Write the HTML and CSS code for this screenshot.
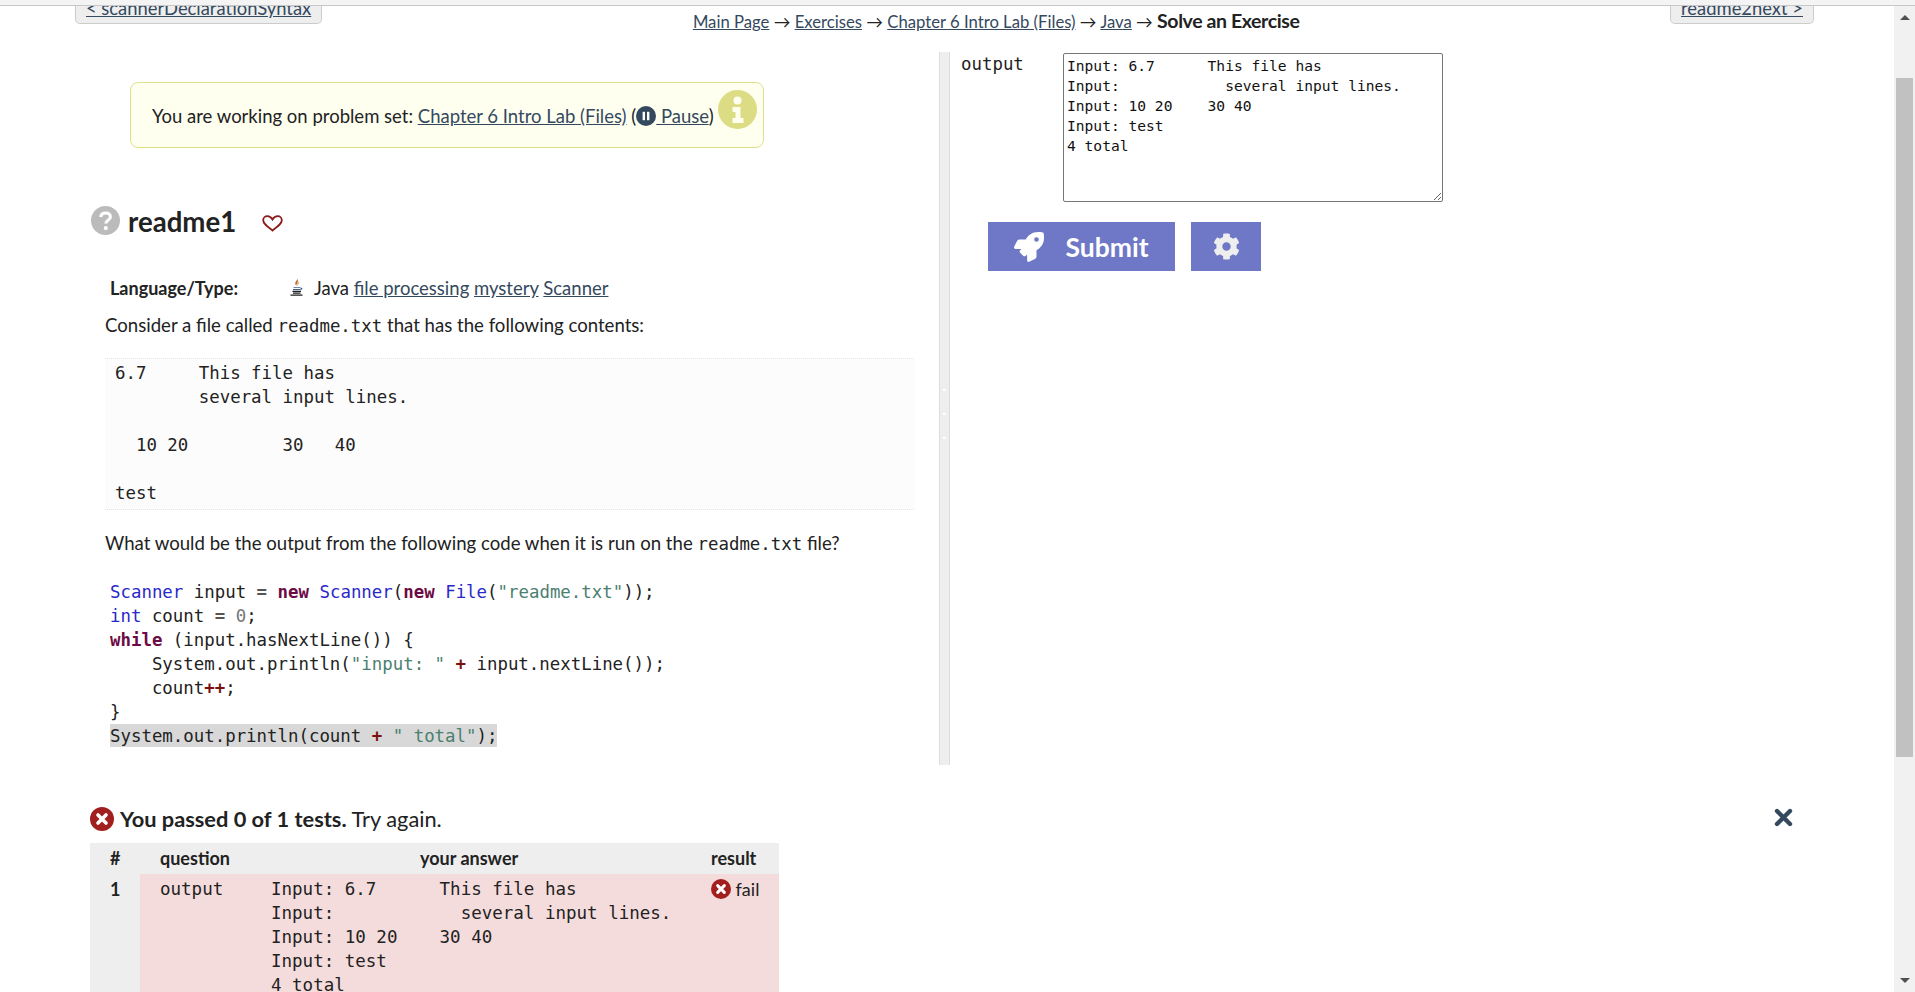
FILE: index.html
```html
<!DOCTYPE html>
<html lang="en">
<head>
<meta charset="utf-8">
<title>readme1 - Solve an Exercise</title>
<link rel="stylesheet" href="styles.css">
</head>
<body>
<div class="strip"></div>
<div class="window">
<main class="main">
  <nav class="nav">
    <div class="navbtn prev"><a href="#">&lt; scannerDeclarationSyntax</a></div>
    <div class="crumbs"><a href="#">Main Page</a> → <a href="#">Exercises</a> → <a href="#">Chapter 6 Intro Lab (Files)</a> → <a href="#">Java</a> → <b>Solve an Exercise</b></div>
    <div class="navbtn next"><a href="#">readme2next &gt;</a></div>
  </nav>
  <div class="columns">
    <section class="left">
      <div class="notice">
        <span class="notice-text">You are working on problem set: <a href="#">Chapter 6 Intro Lab (Files)</a> (<a href="#"><svg class="pause" viewBox="0 0 20 20"><circle cx="10" cy="10" r="10" fill="#34495e"/><rect x="6.6" y="5.8" width="2.4" height="8.4" fill="#fff"/><rect x="11" y="5.8" width="2.4" height="8.4" fill="#fff"/></svg> Pause</a>)</span>
        <svg class="info" viewBox="0 0 39 39"><circle cx="19.5" cy="19.5" r="19.5" fill="#dcdc85"/><circle cx="19.5" cy="10.5" r="4" fill="#fffff0"/><path d="M14.5 17h8v11h3v5h-11v-5h3v-6h-3z" fill="#fffff0"/></svg>
      </div>
      <h1 class="title">
        <svg class="qmark" viewBox="0 0 28 28"><circle cx="14" cy="14" r="14" fill="#bbb"/><path d="M9.4 10.6c.3-2.6 2.2-3.9 4.7-3.9 2.700 0 4.600 1.600 4.600 3.800 0 3.400-4.400 3.300-4.400 6.500" fill="none" stroke="#fff" stroke-width="3"/><circle cx="14.300" cy="21.300" r="2" fill="#fff"/></svg>
        <span>readme1</span>
        <svg class="heart" viewBox="0 0 21 17"><path d="M10.500 15.500C5 11.300 1.200 8.700 1.200 5.300 1.200 2.900 3 1.200 5.300 1.200c2.200 0 4 1.300 5.200 3.300 1.200-2 3-3.300 5.200-3.300 2.300 0 4.100 1.700 4.100 4.100 0 3.400-3.800 6-9.300 10.200z" fill="none" stroke="#8a1c1c" stroke-width="1.800"/></svg>
      </h1>
      <div class="meta">
        <b class="meta-label">Language/Type:</b>
        <svg class="java" viewBox="0 0 13 18"><path d="M7 0c1.500 2.200-2.800 3.600-1.500 6.500.3.600.6 1 .9 1.500C6 5.500 9.500 4 7 0zM9.500 3.800C7.500 4.800 7 6.300 8 8c-.1-1.500.5-3 1.500-4.200z" fill="#b5651d"/><path d="M3.500 9.200h6.500v.9H3.500zM3 11h7v1H3zM10 9.500c2 0 3 .8 2 2l-2 .8v-.8c1.200-.3 1.500-1.200 0-1.300z" fill="#3b5f8a"/><path d="M2.500 12.800h8.500v1.300H2.500zM3 14.600h7.500v1.200H3zM0.500 16.400h12v1.300h-12z" fill="#1c1c1c"/></svg>
        <span class="meta-value">Java <a href="#">file processing</a> <a href="#">mystery</a> <a href="#">Scanner</a></span>
      </div>
      <p class="para consider">Consider a file called <code>readme.txt</code> that has the following contents:</p>
      <pre class="filebox">6.7     This file has
        several input lines.

  10 20         30   40

test</pre>
      <p class="para what">What would be the output from the following code when it is run on the <code>readme.txt</code> file?</p>
      <pre class="code"><span class="ty">Scanner</span> input <span class="op">=</span> <span class="kw">new</span> <span class="ty">Scanner</span>(<span class="kw">new</span> <span class="ty">File</span>(<span class="str">"readme.txt"</span>));
<span class="ty">int</span> count <span class="op">=</span> <span class="num">0</span>;
<span class="kw">while</span> (input.hasNextLine()) {
    System.out.println(<span class="str">"input: "</span> <span class="op2">+</span> input.nextLine());
    count<span class="op2">++</span>;
}
<span class="hl">System.out.println(count <span class="op2">+</span> <span class="str">" total"</span>);</span></pre>
    </section>
    <div class="split"><i></i><i></i><i></i></div>
    <section class="right">
      <div class="answer">
        <label class="answer-label" for="out">output</label>
        <textarea class="answer-box" id="out" spellcheck="false">Input: 6.7      This file has
Input:            several input lines.
Input: 10 20    30 40
Input: test
4 total</textarea>
      </div>
      <div class="actions">
        <button class="btn submit"><svg class="rocket" viewBox="0 0 512 512"><path fill="#fff" d="M505.12 19.09c-1.19-5.53-6.66-11-12.21-12.19C460.72 0 435.51 0 410.41 0 307.18 0 245.27 55.2 199.05 128H94.84c-16.35.02-35.56 11.88-42.89 26.48L2.52 253.3A28.4 28.4 0 0 0 0 264a24 24 0 0 0 24 24h103.81l-22.47 22.47c-11.37 11.36-13 32.26 0 45.25l50.9 50.91c11.16 11.19 32.16 13.16 45.28 0L224 384.16V488a24 24 0 0 0 24 24 28.56 28.56 0 0 0 10.71-2.52l98.73-49.39c14.63-7.3 26.51-26.5 26.51-42.86V312.8c72.6-46.31 128.03-108.41 128.03-211.1.1-25.2.1-50.4-6.86-82.61zM384.04 168a40 40 0 1 1 40.01-40 40.02 40.02 0 0 1-40.01 40z"/></svg><span>Submit</span></button>
        <button class="btn gear"><svg class="cog" viewBox="0 0 512 512"><path fill="#eee" d="M487.4 315.7l-42.6-24.6c4.3-23.2 4.3-47 0-70.2l42.6-24.6c4.9-2.8 7.1-8.6 5.500-14-11.100-35.600-30-67.800-54.700-94.600-3.800-4.100-10-5.100-14.800-2.300L380.800 110c-17.900-15.400-38.500-27.300-60.800-35.100V25.800c0-5.600-3.900-10.500-9.400-11.700-36.700-8.200-74.300-7.800-109.200 0-5.500 1.200-9.400 6.100-9.400 11.700V75c-22.200 7.900-42.800 19.800-60.800 35.100L88.700 85.500c-4.900-2.800-11-1.900-14.800 2.300-24.700 26.700-43.600 58.900-54.700 94.600-1.700 5.400.6 11.200 5.500 14L67.300 221c-4.300 23.200-4.300 47 0 70.200l-42.600 24.600c-4.900 2.800-7.100 8.600-5.500 14 11.100 35.600 30 67.800 54.700 94.600 3.800 4.100 10 5.100 14.800 2.300l42.600-24.600c17.900 15.400 38.500 27.300 60.800 35.100v49.200c0 5.600 3.900 10.500 9.400 11.700 36.700 8.200 74.300 7.800 109.200 0 5.500-1.200 9.400-6.100 9.400-11.700v-49.200c22.200-7.900 42.800-19.800 60.800-35.100l42.600 24.600c4.900 2.800 11 1.900 14.800-2.300 24.700-26.700 43.600-58.900 54.700-94.600 1.500-5.500-.7-11.300-5.600-14.100zM256 336c-44.100 0-80-35.900-80-80s35.900-80 80-80 80 35.900 80 80-35.900 80-80 80z"/></svg></button>
      </div>
    </section>
  </div>
  <section class="results">
    <div class="results-head">
      <div class="results-msg">
        <svg class="x-circle" viewBox="0 0 24 24"><circle cx="12" cy="12" r="12" fill="#a11f1f"/><path d="M8 8l8 8M16 8l-8 8" stroke="#fff" stroke-width="3.600" stroke-linecap="round"/></svg>
        <span><b>You passed 0 of 1 tests.</b> Try again.</span>
      </div>
      <svg class="close" viewBox="0 0 19 19"><path d="M3 3l13 13M16 3L3 16" stroke="#34495e" stroke-width="4.400" stroke-linecap="round"/></svg>
    </div>
    <table class="tests">
      <thead>
        <tr><th class="c-num">#</th><th class="c-q">question</th><th class="c-a">your answer</th><th class="c-r">result</th></tr>
      </thead>
      <tbody>
        <tr>
          <th class="c-num">1</th>
          <td class="c-q mono">output</td>
          <td class="c-a mono">Input: 6.7      This file has
Input:            several input lines.
Input: 10 20    30 40
Input: test
4 total</td>
          <td class="c-r"><svg class="x-small" viewBox="0 0 24 24"><circle cx="12" cy="12" r="12" fill="#a11f1f"/><path d="M8 8l8 8M16 8l-8 8" stroke="#fff" stroke-width="3.600" stroke-linecap="round"/></svg> fail</td>
        </tr>
      </tbody>
    </table>
  </section>
</main>
<div class="scrollbar">
  <span class="arrow up"></span>
  <span class="thumb"></span>
  <span class="arrow down"></span>
</div>
</div>
</body>
</html>
```
FILE: styles.css
```css
* { box-sizing: border-box; }
html, body { height: 100%; }
body {
  margin: 0;
  overflow: hidden;
  display: flex;
  flex-direction: column;
  background: #fff;
  color: #222;
  font-family: Lato, "Open Sans", sans-serif;
  font-size: 18px;
}
a { color: #34495e; text-decoration: underline; }
.strip { height: 6px; flex: none; background: #f4f4f4; border-bottom: 1px solid #c8c8c8; }
.window { flex: 1; min-height: 0; display: flex; }
.main { flex: 1; min-width: 0; overflow: hidden; }
.scrollbar { width: 21px; flex: none; background: #f1f1f1; display: flex; flex-direction: column; align-items: center; }
.thumb { width: 17px; height: 679px; background: #c1c1c1; margin-top: 58px; }
.arrow { width: 0; height: 0; border-left: 5px solid transparent; border-right: 5px solid transparent; }
.arrow.up { border-bottom: 5px solid #505050; margin-top: 9px; }
.arrow.down { border-top: 5px solid #505050; margin-top: 221px; }

.nav { height: 46px; display: flex; justify-content: space-between; align-items: flex-start; padding: 0 80px 0 75px; }
.navbtn { height: 18px; padding: 0 10px 5px; display: flex; align-items: flex-end; overflow: hidden; background: #eee; border: 1px solid #ccc; border-top: 0; border-radius: 0 0 5px 5px; line-height: 20px; font-size: 18.4px; }
.crumbs { padding-top: 3px; font-size: 16.7px; line-height: 24px; }
.crumbs b { font-size: 19.5px; font-weight: 700; letter-spacing: -0.4px; color: #222; }

.columns { display: flex; }
.left { width: 939px; flex: none; padding: 30px 25px 17px 90px; }
.split { width: 11px; flex: none; background: #eee; border-left: 1px solid #ddd; border-right: 1px solid #ddd; display: flex; flex-direction: column; align-items: center; gap: 22px; padding-top: 337px; }
.split i { width: 3px; height: 2px; background: #fff; }
.right { flex: 1; padding-left: 11px; }

.notice { margin-left: 40px; width: 634px; height: 66px; padding: 7px 6px 0 21px; display: flex; justify-content: space-between; background: #fffff0; border: 1px solid #dfe08a; border-radius: 8px; }
.notice-text { padding-top: 14px; font-size: 18.5px; line-height: 24px; white-space: nowrap; }
.pause { width: 20px; height: 20px; vertical-align: -3px; }
.info { width: 39px; height: 39px; flex: none; }
.title { margin: 58px 0 0; height: 32px; display: flex; align-items: center; font-size: 27.6px; font-weight: 700; line-height: 32px; color: #222; }
.qmark { width: 29px; height: 29px; margin: -4px 8px 0 1px; flex: none; }
.heart { width: 21px; height: 17px; margin-left: 26px; margin-top: 2px; }
.meta { margin: 38px 0 0 20px; display: flex; align-items: center; line-height: 24px; font-size: 18px; }
.meta-label { width: 179px; }
.java { width: 13px; height: 18px; margin: -3px 11px 0 1px; }
.meta-value { font-size: 18.5px; }
.para { margin: 13px 0 0 15px; line-height: 24px; font-size: 18.6px; }
.para code { font-family: "DejaVu Sans Mono", monospace; font-size: 17.4px; }
.what { margin-top: 21px; }
.filebox, .code, .mono, .answer-label { font-family: "DejaVu Sans Mono", monospace; font-size: 17.4px; line-height: 24px; }
.filebox { margin: 20px 0 0 15px; padding: 2px 10px 4px; background: #fcfcfc; border-top: 1px dotted #e4e4e4; border-bottom: 1px dotted #e4e4e4; }
.code { margin: 24px 0 0 20px; }
.ty { color: #2a28c8; }
.kw { color: #6d0a45; font-weight: 700; }
.str { color: #4a8070; }
.op { color: #555; font-weight: 700; }
.op2 { color: #7a1010; font-weight: 700; }
.num { color: #777; }
.hl { background: #d8d8d8; display: inline-block; height: 23px; }

.answer { display: flex; }
.answer-label { width: 102px; padding-top: 0; line-height: 24px; }
.answer-box { width: 380px; height: 149px; margin: 1px 0 0; padding: 2px 3px; border: 1px solid #767676; border-radius: 2px; font-family: "DejaVu Sans Mono", monospace; font-size: 14.6px; line-height: 20px; color: #111; background: #fff; resize: both; outline: 0; }
.actions { display: flex; gap: 16px; margin: 20px 0 0 27px; }
.btn { height: 49px; border: 0; padding: 0; background: #6f78c6; display: flex; align-items: center; justify-content: center; }
.submit { width: 187px; gap: 21px; color: #fff; font-family: Lato, sans-serif; font-size: 26.5px; font-weight: 700; }
.gear { width: 70px; }
.rocket { width: 30px; height: 30px; }
.cog { width: 27px; height: 27px; }

.results { padding: 42px 101px 0 90px; }
.results-head { height: 24px; display: flex; justify-content: space-between; align-items: center; }
.results-msg { display: flex; align-items: center; gap: 6px; font-size: 21.8px; line-height: 24px; }
.results-msg b { font-weight: 700; }
.x-circle { width: 24px; height: 24px; flex: none; }
.close { width: 19px; height: 19px; margin-top: -3px; }
.tests { margin-top: 12px; width: 689px; border-collapse: collapse; table-layout: fixed; }
.tests th, .tests td { padding: 0; text-align: left; vertical-align: top; }
.tests thead th { height: 31px; background: #eee; line-height: 31px; font-size: 18px; font-weight: 700; }
.tests tbody th { background: #eee; padding-top: 3px; line-height: 24px; font-weight: 700; font-size: 18px; }
.tests td { background: #f5dcdc; padding-top: 3px; line-height: 24px; }
.tests td.mono { font-size: 17.5px; }
.tests .c-num { width: 50px; padding-left: 20px; }
.tests .c-q { width: 131px; padding-left: 20px; }
.tests .c-a { width: 420px; }
.tests thead .c-a { padding-left: 149px; }
.tests .c-r { width: 88px; padding-left: 20px; }
.tests td.c-a { white-space: pre; }
.x-small { width: 20px; height: 20px; vertical-align: -3px; }
```
